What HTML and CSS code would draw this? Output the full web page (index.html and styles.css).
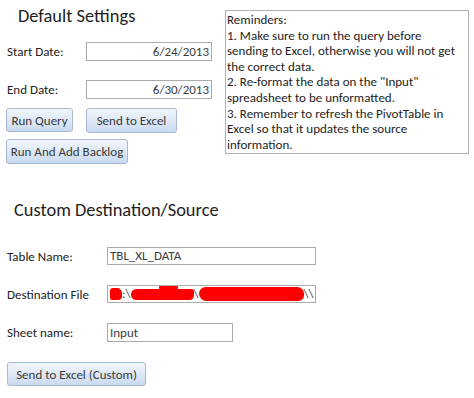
FILE: index.html
```html
<!DOCTYPE html>
<html>
<head>
<meta charset="utf-8">
<link rel="stylesheet" href="styles.css">
</head>
<body>
<div class="page">
  <div class="top">
    <div class="left">
      <div class="heading h1">Default Settings</div>
      <div class="row r1">
        <div class="label">Start Date:</div>
        <div class="field date">6/24/2013</div>
      </div>
      <div class="row r2">
        <div class="label">End Date:</div>
        <div class="field date">6/30/2013</div>
      </div>
      <div class="btnrow">
        <div class="btn b-run">Run Query</div>
        <div class="btn b-send">Send to Excel</div>
      </div>
      <div class="btn b-backlog">Run And Add Backlog</div>
    </div>
    <div class="reminders">
      <div>Reminders:</div>
      <div>1. Make sure to run the query before</div>
      <div>sending to Excel, otherwise you will not get</div>
      <div>the correct data.</div>
      <div>2. Re-format the data on the "Input"</div>
      <div>spreadsheet to be unformatted.</div>
      <div>3. Remember to refresh the PivotTable in</div>
      <div>Excel so that it updates the source</div>
      <div>information.</div>
    </div>
  </div>
  <div class="bottom">
    <div class="heading h2">Custom Destination/Source</div>
    <div class="row2 f1">
      <div class="label2">Table Name:</div>
      <div class="field wide">TBL_XL_DATA</div>
    </div>
    <div class="row2 f2">
      <div class="label2">Destination File</div>
      <div class="field wide dest"><span class="blot bl1"></span><span class="sep">:\</span><span class="blot bl2"><span class="bump"></span></span><span class="sep">\</span><span class="blot bl3"></span><span class="sep">\\</span></div>
    </div>
    <div class="row2 f3">
      <div class="label2">Sheet name:</div>
      <div class="field short">Input</div>
    </div>
    <div class="btn b-custom">Send to Excel (Custom)</div>
  </div>
</div>
</body>
</html>
```
FILE: styles.css
```css
html, body {
  margin: 0;
  padding: 0;
  background: #ffffff;
}
body {
  font-family: Carlito, Lato, "Open Sans", sans-serif;
  font-size: 13px;
  color: #222;
}
.page {
  width: 474px;
  height: 398px;
  overflow: hidden;
}
.top {
  display: flex;
  align-items: flex-start;
  padding: 6px 0 0 6px;
}
.left {
  width: 206px;
  display: flex;
  flex-direction: column;
  align-items: flex-start;
}
.heading {
  font-size: 18.4px;
  line-height: 20px;
  height: 20px;
  color: #1e1e1e;
  white-space: nowrap;
}
.h1 { padding-left: 12px; }
.row {
  display: flex;
  align-items: center;
  height: 19px;
}
.r1 { margin-top: 16px; }
.r2 { margin-top: 19px; }
.label {
  width: 80px;
  padding-left: 1px;
  box-sizing: border-box;
  white-space: nowrap;
}
.field {
  box-sizing: border-box;
  border: 1px solid #ababab;
  background: #fff;
  color: #3c3c3c;
  line-height: 17px;
  white-space: nowrap;
  overflow: hidden;
}
.date {
  width: 126px;
  height: 19px;
  text-align: right;
  padding-right: 2px;
}
.btnrow {
  display: flex;
  gap: 13px;
  margin-top: 9px;
  align-items: flex-start;
}
.btn {
  box-sizing: border-box;
  border: 1px solid #a7b9d3;
  border-radius: 3px;
  background: linear-gradient(#f2f6fb, #dce7f5 55%, #c9daef);
  color: #3a3a3a;
  display: flex;
  align-items: center;
  justify-content: center;
  white-space: nowrap;
}
.b-run { width: 67px; height: 24px; }
.b-send { width: 91px; height: 25px; }
.b-backlog { width: 122px; height: 25px; margin-top: 6px; }
.reminders {
  margin-left: 13px;
  margin-top: 4px;
  width: 244px;
  box-sizing: border-box;
  border: 1px solid #b0b0b0;
  padding: 1px 0 1px 1px;
  line-height: 15.6px;
  color: #1e1e1e;
  white-space: nowrap;
}
.bottom {
  display: flex;
  flex-direction: column;
  align-items: flex-start;
  padding-left: 7px;
  margin-top: 36px;
}
.h2 { padding-left: 7px; }
.row2 {
  display: flex;
  align-items: center;
}
.f1 { margin-top: 27px; }
.f2 { margin-top: 20px; }
.f3 { margin-top: 20px; }
.label2 {
  width: 100px;
  white-space: nowrap;
}
.wide {
  width: 209px;
  height: 18px;
  line-height: 16px;
  padding-left: 2px;
}
.short {
  width: 126px;
  height: 19px;
  padding-left: 2px;
}
.dest {
  display: flex;
  align-items: center;
  position: relative;
  overflow: hidden;
}
.sep {
  color: #444;
  flex: none;
}
.blot {
  display: inline-block;
  background: #ff0000;
  flex: none;
  position: relative;
}
.bl1 { width: 12px; height: 12px; border-radius: 3px 5px 4px 2px; }
.bl2 { width: 63px; height: 11px; border-radius: 6px 3px 5px 6px; }
.bl3 { width: 105px; height: 14px; border-radius: 7px 7px 6px 8px; }
.bump {
  position: absolute;
  left: 28px;
  top: -5px;
  width: 19px;
  height: 6px;
  background: #ff0000;
  border-radius: 50% 50% 2px 2px;
}
.b-custom {
  width: 139px;
  height: 24px;
  margin-top: 20px;
}
```
